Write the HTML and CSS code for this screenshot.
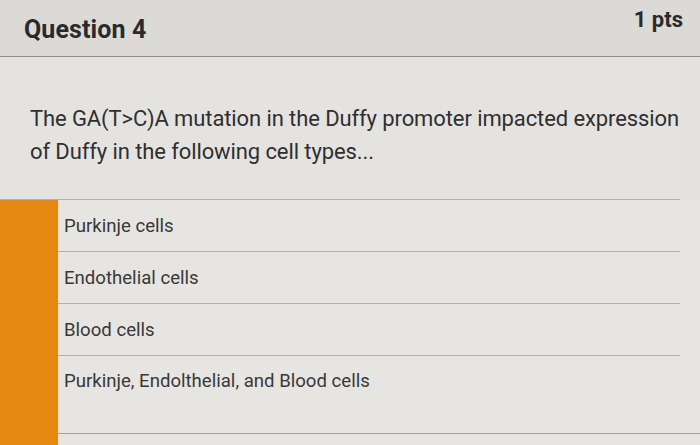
FILE: index.html
```html
<!DOCTYPE html>
<html lang="en">
<head>
<meta charset="utf-8">
<title>Question 4</title>
<link rel="stylesheet" href="styles.css">
</head>
<body>
<div class="quiz">
  <header class="header">
    <h2 class="title">Question 4</h2>
    <span class="points">1 pts</span>
  </header>
  <div class="question">
    <p class="prompt">The GA(T&gt;C)A mutation in the Duffy promoter impacted expression of Duffy in the following cell types...</p>
  </div>
  <div class="answers">
    <div class="marker"></div>
    <ul class="list">
      <li class="option">Purkinje cells</li>
      <li class="option">Endothelial cells</li>
      <li class="option">Blood cells</li>
      <li class="option last">Purkinje, Endolthelial, and Blood cells</li>
    </ul>
  </div>
</div>
</body>
</html>
```
FILE: styles.css
```css
* { box-sizing: border-box; }
html, body {
  margin: 0;
  padding: 0;
}
body {
  width: 700px;
  height: 445px;
  overflow: hidden;
  background: #e4e2de;
  font-family: Roboto, "Liberation Sans", sans-serif;
  color: #2e2e30;
}
.quiz {
  display: flex;
  flex-direction: column;
  height: 445px;
}
.header {
  height: 57px;
  display: flex;
  justify-content: space-between;
  align-items: flex-start;
  padding: 0 17px 0 24px;
  background: #dcdad6;
  border-bottom: 1px solid #8e8c89;
}
.title {
  margin: 0;
  padding-top: 15px;
  font-size: 25px;
  line-height: 30px;
  font-weight: 700;
  letter-spacing: 0.1px;
  color: #2a2a2d;
}
.points {
  padding-top: 6px;
  font-size: 22px;
  line-height: 28px;
  font-weight: 700;
  color: #2a2a2d;
}
.question {
  padding: 45px 0 31px 30px;
  margin-right: 20px;
  border-bottom: 1px solid #b3b1ae;
  background: #e5e3df;
}
.prompt {
  width: 662px;
  margin: 0;
  font-size: 22px;
  line-height: 33px;
  letter-spacing: -0.1px;
  color: #2f2f31;
}
.answers {
  flex: 1;
  display: flex;
}
.marker {
  width: 58px;
  background: #e5880f;
}
.list {
  flex: 1;
  margin: 0;
  padding: 0;
  list-style: none;
  background: #e7e5e1;
}
.option {
  margin-right: 20px;
  padding: 15px 0 14px 6px;
  font-size: 18.6px;
  line-height: 22px;
  color: #38383a;
  border-bottom: 1px solid #b3b1ae;
}
.option.last {
  margin-right: 0;
  padding-top: 14px;
  padding-bottom: 41px;
  border-bottom-color: #a6a4a1;
}
```
